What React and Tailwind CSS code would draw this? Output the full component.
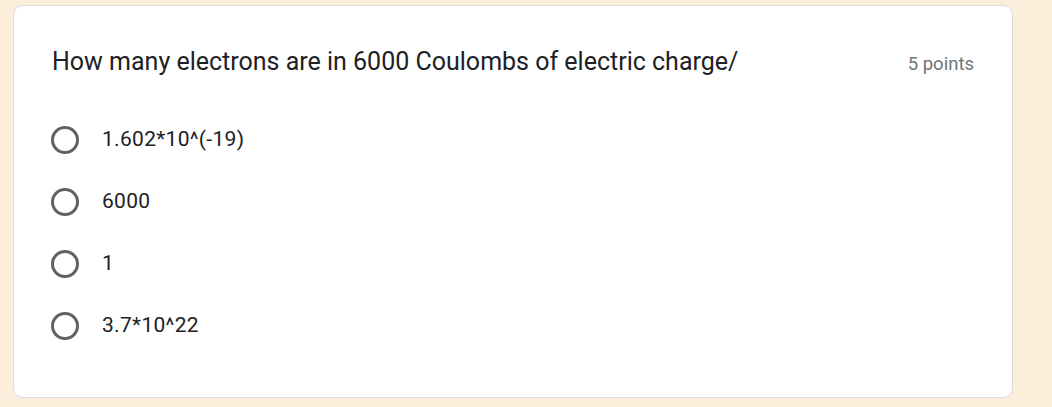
const options = ['1.602*10^(-19)', '6000', '1', '3.7*10^22'];

export default function App() {
  return (
    <div
      className="min-h-screen w-full bg-[#fdeedb] pt-[5px] pl-[13px]"
      style={{ fontFamily: 'Roboto, "Liberation Sans", sans-serif' }}
    >
      <div className="w-[1000px] h-[393px] rounded-[10px] border border-[#dadce0] bg-white pt-[38px] pl-[38px] pr-[38px]">
        {/* question header */}
        <div className="flex items-baseline justify-between">
          <div className="text-[25px] leading-[36px] text-[#202124]">
            How many electrons are in 6000 Coulombs of electric charge/
          </div>
          <div className="text-[18.5px] text-[#70757a]">5 points</div>
        </div>

        {/* choices */}
        <div className="mt-[29px] -ml-[1px]">
          {options.map((opt) => (
            <div key={opt} className="flex h-[62px] items-center">
              <div className="h-[28px] w-[28px] rounded-full border-[3px] border-[#5f6368]" />
              <span className="ml-[23px] text-[21px] tracking-[0.3px] text-[#202124]">{opt}</span>
            </div>
          ))}
        </div>
      </div>
    </div>
  );
}
